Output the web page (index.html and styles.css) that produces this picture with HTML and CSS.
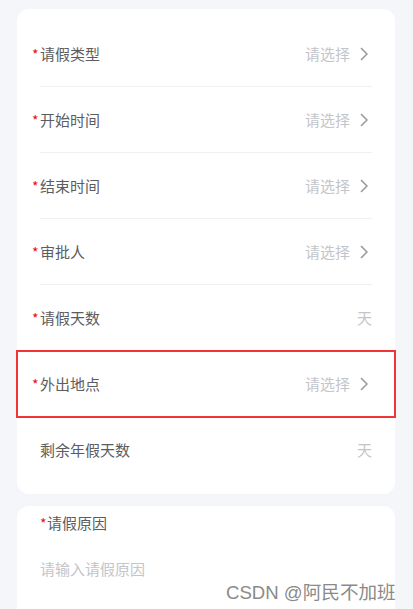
FILE: index.html
```html
<!DOCTYPE html>
<html lang="zh-CN">
<head>
    <meta charset="UTF-8">
    <meta name="viewport" content="width=device-width, initial-scale=1.0">
    <title>请假申请</title>
    <link rel="stylesheet" href="styles.css">
</head>
<body>
    <div class="page">
        <div class="card">
            <div class="row line">
                <span class="label"><i class="req">*</i>请假类型</span>
                <span class="value">请选择<svg class="arrow" viewBox="0 0 8 14"><path d="M1 1l6 6-6 6" /></svg></span>
            </div>
            <div class="row line">
                <span class="label"><i class="req">*</i>开始时间</span>
                <span class="value">请选择<svg class="arrow" viewBox="0 0 8 14"><path d="M1 1l6 6-6 6" /></svg></span>
            </div>
            <div class="row line">
                <span class="label"><i class="req">*</i>结束时间</span>
                <span class="value">请选择<svg class="arrow" viewBox="0 0 8 14"><path d="M1 1l6 6-6 6" /></svg></span>
            </div>
            <div class="row line">
                <span class="label"><i class="req">*</i>审批人</span>
                <span class="value">请选择<svg class="arrow" viewBox="0 0 8 14"><path d="M1 1l6 6-6 6" /></svg></span>
            </div>
            <div class="row">
                <span class="label"><i class="req">*</i>请假天数</span>
                <span class="value">天</span>
            </div>
            <div class="row marked">
                <span class="label"><i class="req">*</i>外出地点</span>
                <span class="value">请选择<svg class="arrow" viewBox="0 0 8 14"><path d="M1 1l6 6-6 6" /></svg></span>
            </div>
            <div class="row">
                <span class="label">剩余年假天数</span>
                <span class="value">天</span>
            </div>
        </div>

        <div class="card reason">
            <div class="reason-title"><i class="req">*</i>请假原因</div>
            <div class="reason-input">请输入请假原因</div>
        </div>
    </div>

    <div class="watermark">CSDN @阿民不加班</div>
</body>
</html>
```

FILE: styles.css
```css
/* Leave request form, light theme */
* {
    margin: 0;
    padding: 0;
    box-sizing: border-box;
}

body {
    background: #f5f6fa;
    font-family: 'Noto Sans CJK SC', 'Noto Sans', sans-serif;
    font-size: 15px;
    color: #5c5d5f;
    height: 609px;
    overflow: hidden;
}

.page {
    padding: 9px 18px 0 17px;
}

.card {
    background: #fff;
    border-radius: 12px;
    padding: 12px 0 11px;
}

.row {
    display: flex;
    align-items: center;
    justify-content: space-between;
    height: 66px;
    margin: 0 23px;
    position: relative;
}

.line {
    border-bottom: 1px solid #f0f1f3;
}

.marked {
    margin: 0;
    padding: 0 23px;
    outline: 2px solid #f23434;
    outline-offset: -1px;
}

.label {
    display: flex;
    align-items: center;
    line-height: 20px;
}

.req {
    font-style: normal;
    color: #ee0a24;
    width: 8px;
    margin-left: -8px;
    font-size: 14px;
}

.value {
    display: flex;
    align-items: center;
    color: #c3c5ca;
    line-height: 20px;
}

.arrow {
    width: 8px;
    height: 14px;
    margin-left: 10px;
    margin-right: 4px;
    fill: none;
    stroke: #969799;
    stroke-width: 1.5;
}

.reason {
    margin-top: 12px;
    padding: 7px 23px 0;
    min-height: 120px;
}

.reason-title {
    display: flex;
    align-items: center;
    line-height: 20px;
}

.reason-title .req {
    margin-left: 0;
    width: 7px;
}

.reason-input {
    margin-top: 26px;
    line-height: 20px;
    color: #c3c5ca;
}

.watermark {
    position: absolute;
    left: 226px;
    top: 577px;
    font-family: 'Liberation Sans', 'Noto Sans CJK SC', sans-serif;
    font-size: 18.6px;
    color: #8a8a8a;
    text-shadow: 1px 1px 1px rgba(255, 255, 255, 0.8);
    white-space: nowrap;
}
```
